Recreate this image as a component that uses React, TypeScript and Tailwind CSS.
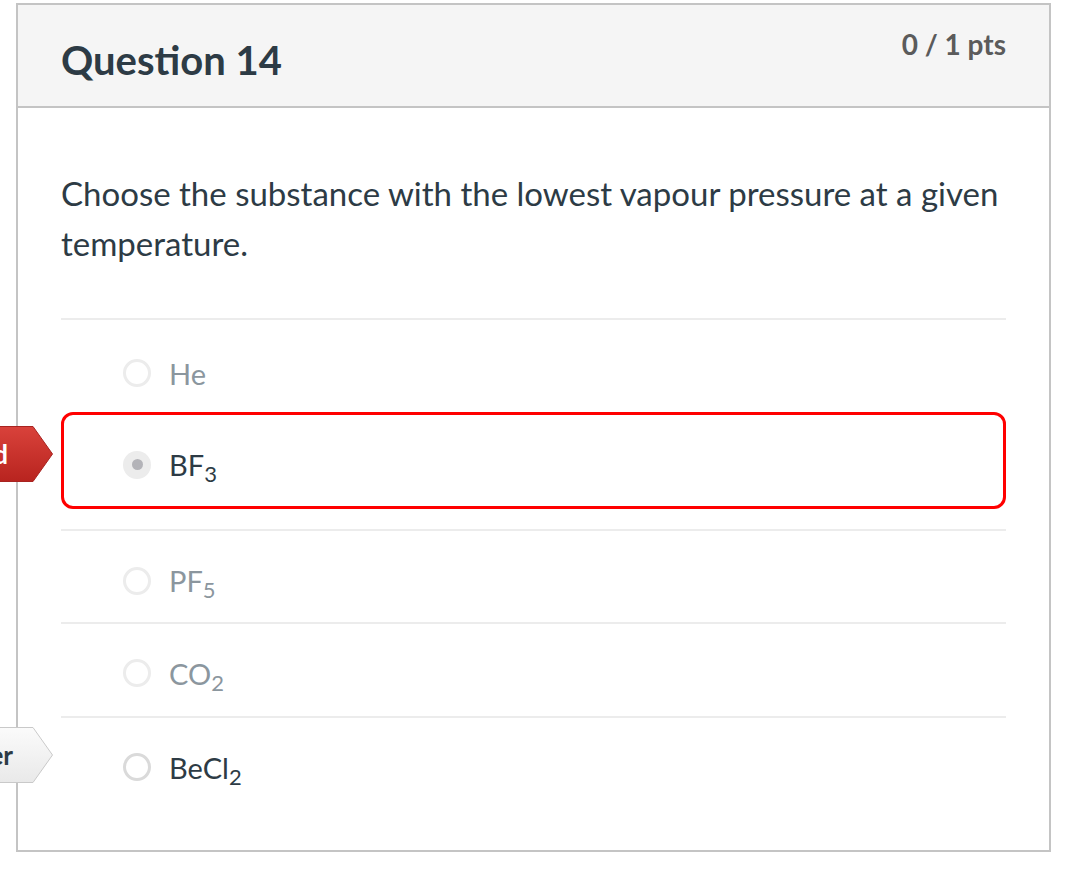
import React from 'react'

type Answer = {
  id: string
  label: React.ReactNode
  state: 'plain' | 'picked' | 'correct'
}

const sub = 'text-[22px] relative top-[6px]'

const answers: Answer[] = [
  { id: 'he', label: 'He', state: 'plain' },
  { id: 'bf3', label: <>BF<sub className={sub}>3</sub></>, state: 'picked' },
  { id: 'pf5', label: <>PF<sub className={sub}>5</sub></>, state: 'plain' },
  { id: 'co2', label: <>CO<sub className={sub}>2</sub></>, state: 'plain' },
  { id: 'becl2', label: <>BeCl<sub className={sub}>2</sub></>, state: 'correct' },
]

function Radio({ checked, dark }: { checked?: boolean; dark?: boolean }) {
  if (checked) {
    return (
      <span className="w-[28px] h-[28px] rounded-full bg-[#ececec] flex items-center justify-center shrink-0">
        <span className="w-[11px] h-[11px] rounded-full bg-[#b3b3b8]" />
      </span>
    )
  }
  return (
    <span
      className={`w-[28px] h-[28px] rounded-full border-[3px] shrink-0 ${
        dark ? 'border-[#dadada]' : 'border-[#ececec]'
      }`}
    />
  )
}

function AnswerRow({ a }: { a: Answer }) {
  const dark = a.state !== 'plain'
  return (
    <div className="flex items-center gap-[18px] pl-[62px]">
      <Radio checked={a.state === 'picked'} dark={a.state === 'correct'} />
      <span className={`text-[29px] leading-none ${dark ? 'text-[#2d3b45]' : 'text-[#8b969e]'}`}>{a.label}</span>
    </div>
  )
}

// arrow tag hanging off the left edge, text cut by the viewport
function SideTag({ text, tone, top, pr }: { text: string; tone: 'red' | 'grey'; top: number; pr: number }) {
  const red = tone === 'red'
  return (
    <div className="absolute left-[-200px] w-[253px] h-[56px]" style={{ top }}>
      <svg className="absolute inset-0 w-full h-full" viewBox="0 0 253 56" preserveAspectRatio="none">
        <defs>
          <linearGradient id={`g-${tone}`} x1="0" y1="0" x2="0" y2="1">
            <stop offset="0" stopColor={red ? '#d9423b' : '#fbfbfb'} />
            <stop offset="1" stopColor={red ? '#b8241f' : '#e9e9e9'} />
          </linearGradient>
        </defs>
        <polygon
          points="0.5,0.5 233,0.5 252.5,28 233,55.5 0.5,55.5"
          fill={`url(#g-${tone})`}
          stroke={red ? '#a82320' : '#c9c9c9'}
          strokeWidth="1"
        />
      </svg>
      <span
        className={`relative h-full flex items-center justify-end text-[26px] font-bold ${
          red ? 'text-white' : 'text-[#2d3b45]'
        }`}
        style={{ paddingRight: pr }}
      >
        {text}
      </span>
    </div>
  )
}

export default function App() {
  return (
    <div
      className="relative w-[1078px] h-[888px] bg-white overflow-hidden"
      style={{ fontFamily: 'Lato, "Noto Sans", sans-serif' }}
    >
      <div className="ml-[16px] mt-[3px] w-[1035px] h-[849px] border-2 border-[#c4c4c4] flex flex-col">
        <div className="h-[103px] bg-[#f5f5f5] border-b-2 border-[#c4c4c4] px-[43px] flex justify-between items-start shrink-0">
          <h2 className="mt-[31px] text-[40px] leading-[48px] font-bold text-[#2d3b45]">Question 14</h2>
          <span className="mt-[22px] text-[28px] leading-[34px] font-bold text-[#5b5b5b]">0 / 1 pts</span>
        </div>

        <div className="px-[43px]">
          <p className="mt-[60px] text-[33px] leading-[50px] text-[#2d3b45]">
            Choose the substance with the lowest vapour pressure at a given temperature.
          </p>

          <div className="mt-[50px] border-t-2 border-[#ececec]">
            <div className="h-[92px] pt-[14px] flex items-center">
              <AnswerRow a={answers[0]} />
            </div>
            <div className="h-[97px] border-[3px] border-[#ff0000] rounded-[12px] pt-[8px] flex items-center">
              <div className="-ml-[3px]">
                <AnswerRow a={answers[1]} />
              </div>
            </div>
            <div className="mt-[20px] border-t-2 border-[#ececec] h-[93px] pt-[8px] flex items-center">
              <AnswerRow a={answers[2]} />
            </div>
            <div className="border-t-2 border-[#ececec] h-[94px] pt-[6px] flex items-center">
              <AnswerRow a={answers[3]} />
            </div>
            <div className="border-t-2 border-[#ececec] h-[94px] pt-[6px] flex items-center">
              <AnswerRow a={answers[4]} />
            </div>
          </div>
        </div>
      </div>

      <SideTag text="You Answered" tone="red" top={426} pr={45} />
      <SideTag text="Correct Answer" tone="grey" top={727} pr={40} />
    </div>
  )
}
